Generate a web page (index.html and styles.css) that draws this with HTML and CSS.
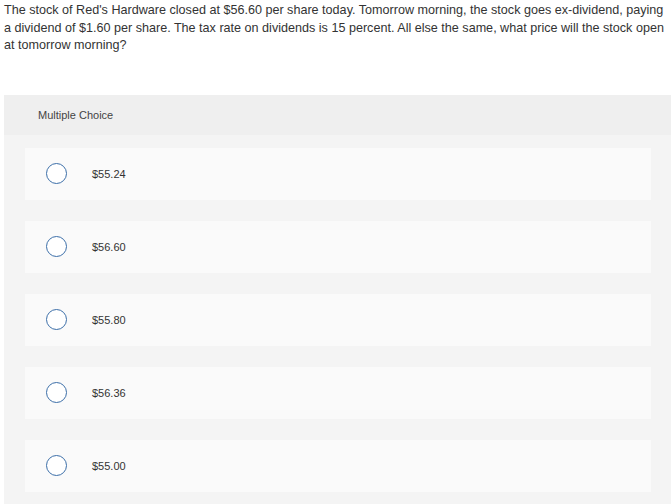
FILE: index.html
```html
<!DOCTYPE html>
<html>
<head>
<meta charset="utf-8">
<link rel="stylesheet" href="styles.css">
</head>
<body>
<div class="page">
  <p class="question">The stock of Red's Hardware closed at $56.60 per share today. Tomorrow morning, the stock goes ex-dividend, paying a dividend of $1.60 per share. The tax rate on dividends is 15 percent. All else the same, what price will the stock open at tomorrow morning?</p>
  <div class="mc">
    <div class="mc-header">Multiple Choice</div>
    <div class="mc-body">
      <div class="option"><span class="radio"></span><span class="label">$55.24</span></div>
      <div class="option"><span class="radio"></span><span class="label">$56.60</span></div>
      <div class="option"><span class="radio"></span><span class="label">$55.80</span></div>
      <div class="option"><span class="radio"></span><span class="label">$56.36</span></div>
      <div class="option"><span class="radio"></span><span class="label">$55.00</span></div>
    </div>
  </div>
</div>
</body>
</html>
```
FILE: styles.css
```css
html, body {
  margin: 0;
  padding: 0;
  background: #ffffff;
}
.page {
  padding: 2px 0 0 4px;
  font-family: "Liberation Sans", Arial, sans-serif;
  color: #333333;
}
.question {
  margin: 0;
  font-size: 12.6px;
  line-height: 17.5px;
  padding-right: 2px;
}
.mc {
  margin-top: 40px;
}
.mc-header {
  background: #efefef;
  height: 40px;
  display: flex;
  align-items: center;
  padding-left: 34px;
  font-size: 11px;
  color: #444444;
}
.mc-body {
  background: #f4f4f4;
  padding: 13px 20px 13px 21px;
  display: flex;
  flex-direction: column;
  gap: 21px;
}
.option {
  background: #fafafa;
  height: 52px;
  display: flex;
  align-items: center;
  padding-left: 21px;
}
.radio {
  width: 19px;
  height: 19px;
  border: 1.5px solid #3b6ea8;
  border-radius: 50%;
  background: #ffffff;
  flex: none;
}
.label {
  margin-left: 25px;
  font-size: 11px;
  color: #333333;
}
```
